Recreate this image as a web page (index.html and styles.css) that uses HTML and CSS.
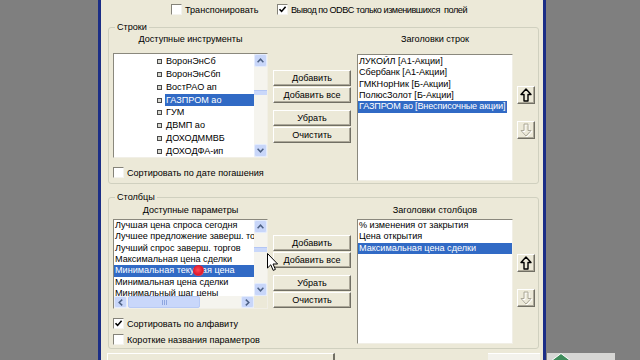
FILE: index.html
```html
<!DOCTYPE html>
<html lang="ru">
<head>
<meta charset="UTF-8">
<title>Настройка таблицы</title>
<link rel="stylesheet" href="styles.css">
</head>
<body>
<div class="dialog">
  <div class="top-row">
    <label class="check first"><span class="box"></span>Транспонировать</label>
    <label class="check odbc"><span class="box"><svg width="9" height="9" viewBox="0 0 9 9"><path d="M1.5 4.2 L3.6 6.4 L7.6 1.8" fill="none" stroke="#000" stroke-width="1.6"/></svg></span>Вывод по ODBC только изменившихся&nbsp; полей</label>
  </div>

  <!-- Строки -->
  <fieldset class="group group-rows">
    <legend>Строки</legend>
    <div class="cols">
      <div class="col col-src">
        <div class="head">Доступные инструменты</div>
        <div class="list tree">
          <div class="items">
            <div class="node"><i></i><span>ВоронЭнСб</span></div>
            <div class="node"><i></i><span>ВоронЭнСбп</span></div>
            <div class="node"><i></i><span>ВостРАО ап</span></div>
            <div class="node"><i></i><span class="sel">ГАЗПРОМ ао</span></div>
            <div class="node"><i></i><span>ГУМ</span></div>
            <div class="node"><i></i><span>ДВМП ао</span></div>
            <div class="node"><i></i><span>ДОХОДММВБ</span></div>
            <div class="node"><i></i><span>ДОХОДФА-ип</span></div>
          </div>
          <div class="vbar">
            <span class="sb-btn"><svg width="7" height="5" viewBox="0 0 7 5"><path d="M0.6 4.2 L3.5 1.2 L6.4 4.2" fill="none" stroke="#4d6185" stroke-width="1.5"/></svg></span>
            <span class="thumb thumb-a"></span>
            <span class="sb-btn end"><svg width="7" height="5" viewBox="0 0 7 5"><path d="M0.6 0.8 L3.5 3.8 L6.4 0.8" fill="none" stroke="#4d6185" stroke-width="1.5"/></svg></span>
          </div>
        </div>
        <label class="check under"><span class="box"></span>Сортировать по дате погашения</label>
      </div>
      <div class="col col-btn">
        <button class="btn">Добавить</button>
        <button class="btn">Добавить все</button>
        <button class="btn gap">Убрать</button>
        <button class="btn">Очистить</button>
      </div>
      <div class="col col-dst">
        <div class="head">Заголовки строк</div>
        <div class="list plain">
          <div class="row">ЛУКОЙЛ [А1-Акции]</div>
          <div class="row">Сбербанк [А1-Акции]</div>
          <div class="row">ГМКНорНик [Б-Акции]</div>
          <div class="row">ПолюсЗолот [Б-Акции]</div>
          <div class="row sel short">ГАЗПРОМ ао [Внесписочные акции]</div>
        </div>
      </div>
      <div class="col col-move">
        <button class="move"><svg width="12" height="14" viewBox="0 0 12 14"><path d="M6 1 L11 6.5 L8 6.5 L8 13 L4 13 L4 6.5 L1 6.5 Z" fill="#ece9d8" stroke="#000" stroke-width="1.4" stroke-linejoin="round"/></svg></button>
        <button class="move off"><svg width="13" height="15" viewBox="0 0 13 15"><path d="M7 14 L12 8.5 L9 8.5 L9 2 L5 2 L5 8.5 L2 8.5 Z" fill="none" stroke="#fff" stroke-width="1"/><path d="M6 13 L11 7.5 L8 7.5 L8 1 L4 1 L4 7.5 L1 7.5 Z" fill="none" stroke="#aca899" stroke-width="1"/></svg></button>
      </div>
    </div>
  </fieldset>

  <!-- Столбцы -->
  <fieldset class="group group-cols">
    <legend>Столбцы</legend>
    <div class="cols">
      <div class="col col-src">
        <div class="head">Доступные параметры</div>
        <div class="list scroll2">
          <div class="items">
            <div class="row">Лучшая цена спроса сегодня</div>
            <div class="row">Лучшее предложение заверш. торгов</div>
            <div class="row">Лучший спрос заверш. торгов</div>
            <div class="row">Максимальная цена сделки</div>
            <div class="row sel">Минимальная текущая цена</div>
            <div class="row">Минимальная цена сделки</div>
            <div class="row">Минимальный шаг цены</div>
          </div>
          <div class="vbar">
            <span class="sb-btn"><svg width="7" height="5" viewBox="0 0 7 5"><path d="M0.6 4.2 L3.5 1.2 L6.4 4.2" fill="none" stroke="#4d6185" stroke-width="1.5"/></svg></span>
            <span class="thumb thumb-b"></span>
            <span class="sb-btn end"><svg width="7" height="5" viewBox="0 0 7 5"><path d="M0.6 0.8 L3.5 3.8 L6.4 0.8" fill="none" stroke="#4d6185" stroke-width="1.5"/></svg></span>
          </div>
          <div class="hbar">
            <span class="sb-btn"><svg width="5" height="7" viewBox="0 0 5 7"><path d="M4.2 0.6 L1.2 3.5 L4.2 6.4" fill="none" stroke="#4d6185" stroke-width="1.5"/></svg></span>
            <span class="hthumb"><i></i><i></i><i></i></span>
            <span class="sb-btn end"><svg width="5" height="7" viewBox="0 0 5 7"><path d="M0.8 0.6 L3.8 3.5 L0.8 6.4" fill="none" stroke="#4d6185" stroke-width="1.5"/></svg></span>
          </div>
          <div class="corner"></div>
        </div>
        <label class="check under"><span class="box"><svg width="9" height="9" viewBox="0 0 9 9"><path d="M1.5 4.2 L3.6 6.4 L7.6 1.8" fill="none" stroke="#000" stroke-width="1.6"/></svg></span>Сортировать по алфавиту</label>
        <label class="check under2"><span class="box"></span>Короткие названия параметров</label>
      </div>
      <div class="col col-btn">
        <button class="btn">Добавить</button>
        <button class="btn">Добавить все</button>
        <button class="btn gap">Убрать</button>
        <button class="btn">Очистить</button>
      </div>
      <div class="col col-dst">
        <div class="head">Заголовки столбцов</div>
        <div class="list plain">
          <div class="row">% изменения от закрытия</div>
          <div class="row">Цена открытия</div>
          <div class="row sel">Максимальная цена сделки</div>
        </div>
      </div>
      <div class="col col-move">
        <button class="move"><svg width="12" height="14" viewBox="0 0 12 14"><path d="M6 1 L11 6.5 L8 6.5 L8 13 L4 13 L4 6.5 L1 6.5 Z" fill="#ece9d8" stroke="#000" stroke-width="1.4" stroke-linejoin="round"/></svg></button>
        <button class="move off"><svg width="13" height="15" viewBox="0 0 13 15"><path d="M7 14 L12 8.5 L9 8.5 L9 2 L5 2 L5 8.5 L2 8.5 Z" fill="none" stroke="#fff" stroke-width="1"/><path d="M6 13 L11 7.5 L8 7.5 L8 1 L4 1 L4 7.5 L1 7.5 Z" fill="none" stroke="#aca899" stroke-width="1"/></svg></button>
      </div>
    </div>
  </fieldset>

  <div class="bottom-row">
    <div class="bottom-panel"></div>
    <div class="bottom-btn"></div>
  </div>
</div>

<!-- курсор и отметка клика поверх окна -->
<div class="click-dot"></div>
<svg class="cursor" width="12" height="19" viewBox="0 0 12 19"><path d="M0.5 0.5 L0.5 15 L3.8 11.8 L6.2 17.4 L8.4 16.4 L6 11 L10.6 11 Z" fill="#fff" stroke="#000" stroke-width="1" stroke-linejoin="round"/></svg>
<div class="logo"><svg width="24" height="7" viewBox="0 0 24 7"><path d="M2 8 L12 0.5 L22 8 Z" fill="#3f8d5c" stroke="#fff" stroke-width="1"/></svg></div>
</body>
</html>
```

FILE: styles.css
```css
* {
    margin: 0;
    padding: 0;
    box-sizing: border-box;
}

body {
    position: relative;
    width: 640px;
    height: 360px;
    overflow: hidden;
    background: #7f7f7f;
    font-family: "Liberation Sans", Arial, sans-serif;
    font-size: 9.1px;
    color: #000;
}

/* Окно */
.dialog {
    margin-left: 98px;
    width: 448px;
    height: 360px;
    background: #ece9d8;
    border-left: 3px solid #1b2d86;
    border-right: 3px solid #1b2d86;
}

.top-row {
    display: flex;
    align-items: center;
    height: 19px;
    margin-bottom: 2px;
    padding-left: 70px;
}

.check {
    display: flex;
    align-items: center;
    gap: 3px;
    height: 11px;
    line-height: 12px;
    white-space: nowrap;
}

.top-row .first {
    width: 106px;
}

.top-row .odbc {
    letter-spacing: -0.45px;
}

.box {
    flex: none;
    display: flex;
    align-items: center;
    justify-content: center;
    width: 11px;
    height: 11px;
    background: #fff;
    border: 1px solid;
    border-color: #858379 #f4f3ee #f4f3ee #858379;
}

/* Группы */
.group {
    min-width: 0;
    margin: 0 4px 0 7px;
    padding: 0 3px 2px 4px;
    border: 1px solid #d0d0bf;
    border-radius: 3px;
}

.group legend {
    margin-left: 2px;
    padding: 0 2px;
    line-height: 12px;
}

.group-cols {
    margin-top: 7px;
    padding-bottom: 3px;
}

.cols {
    display: flex;
    align-items: flex-start;
}

.col {
    display: flex;
    flex-direction: column;
}

.col-src {
    width: 155px;
}

.col-btn {
    width: 78px;
    margin-left: 5px;
}

.col-dst {
    width: 156px;
    margin-left: 6px;
}

.col-move {
    width: 18px;
    margin-left: 4px;
}

.head {
    height: 12px;
    line-height: 12px;
    text-align: center;
    white-space: nowrap;
}

.group-rows .col-src .list { margin-top: 8px; height: 105px; }
.group-rows .col-dst .list { margin-top: 9px; height: 127px; padding-top: 1px; }
.group-rows .col-btn { padding-top: 37px; }
.group-rows .col-move { padding-top: 53px; }

.group-cols .head { margin-top: 1px; }
.group-cols .col-src .list { margin-top: 3px; height: 90px; }
.group-cols .col-dst .list { margin-top: 3px; height: 125px; }
.group-cols .col-btn { padding-top: 32px; }
.group-cols .col-move { padding-top: 51px; }

.under { margin-top: 9px; }
.under2 { margin-top: 5px; }

/* Списки */
.list {
    overflow: hidden;
    background: #fff;
    border: 1px solid;
    border-color: #8a887d #f1efe6 #f1efe6 #8a887d;
}

.row {
    height: 11.35px;
    line-height: 11.35px;
    padding-left: 1px;
    white-space: nowrap;
    overflow: hidden;
}

.sel {
    background: #316ac5;
    color: #fff;
}

.row.short {
    margin-right: 5px;
    letter-spacing: -0.17px;
}

.tree {
    display: grid;
    grid-template-columns: 1fr 13px;
}

.tree .items {
    padding-top: 1px;
    overflow: hidden;
}

.node {
    display: flex;
    align-items: center;
    height: 12.86px;
    padding-left: 43px;
    white-space: nowrap;
}

.node i {
    flex: none;
    width: 5px;
    height: 5px;
    margin-right: 3px;
    border: 1px solid #4a4a4a;
    background: #d8d8d0;
}

.node span {
    flex: 1;
    height: 12.86px;
    line-height: 12.86px;
    padding-left: 1px;
}

.scroll2 {
    display: grid;
    grid-template-columns: 140px 13px;
    grid-template-rows: 76px 12px;
}

.scroll2 .items {
    overflow: hidden;
}

/* Полосы прокрутки */
.vbar {
    display: flex;
    flex-direction: column;
    background: #f5f4ee;
}

.hbar {
    display: flex;
    background: #f5f4ee;
}

.corner {
    background: #ece9d8;
}

.sb-btn {
    flex: none;
    display: flex;
    align-items: center;
    justify-content: center;
    width: 13px;
    height: 13px;
    background: #c8d6f9;
    border: 1px solid #e4ecfd;
    border-radius: 2px;
}

.hbar .sb-btn {
    height: 12px;
}

.sb-btn.end {
    margin-top: auto;
}

.hbar .sb-btn.end {
    margin-top: 0;
    margin-left: auto;
}

.thumb {
    height: 5px;
    background: #cad8fa;
    border-top: 1px solid #b3c6f4;
}

.thumb-a { margin-top: 23px; }
.thumb-b { margin-top: 14px; }

.hthumb {
    display: flex;
    align-items: center;
    justify-content: center;
    gap: 1px;
    width: 72px;
    margin-left: 1px;
    background: #c9d7fa;
    border: 1px solid #b8caf5;
    border-radius: 2px;
}

.hthumb i {
    width: 1px;
    height: 5px;
    background: #8ea6e0;
}

/* Кнопки */
.btn {
    display: block;
    width: 78px;
    height: 16px;
    background: #ece9d8;
    border: 1px solid;
    border-color: #fff #716f64 #716f64 #fff;
    box-shadow: inset -1px -1px 0 #aca899;
    font: inherit;
    line-height: 13px;
    color: #000;
    text-align: center;
}

.btn + .btn { margin-top: 1px; }
.btn.gap { margin-top: 7px; }

.move {
    display: flex;
    align-items: center;
    justify-content: center;
    width: 18px;
    height: 18px;
    background: #ece9d8;
    border: 1px solid;
    border-color: #fff #716f64 #716f64 #fff;
    box-shadow: inset -1px -1px 0 #aca899;
}

.move + .move { margin-top: 17px; }

/* Низ окна */
.bottom-row {
    display: flex;
    margin-top: 4px;
}

.bottom-panel {
    width: 228px;
    height: 12px;
    margin-left: 6px;
    border-top: 1px solid #fff;
    border-left: 1px solid #fff;
    border-right: 2px solid #716f64;
}

.bottom-btn {
    width: 52px;
    height: 12px;
    margin-left: 153px;
    background: #f3f2ec;
    border-top: 1px solid #fff;
}

/* Поверх */
.click-dot {
    position: absolute;
    left: 193px;
    top: 265px;
    width: 11px;
    height: 11px;
    border-radius: 50%;
    background: radial-gradient(circle at 45% 45%, #ff4a5a 0, #e01a2c 55%, #f07a86 100%);
}

.cursor {
    position: absolute;
    left: 267px;
    top: 253px;
}

.logo {
    position: absolute;
    left: 547px;
    top: 353px;
    width: 68px;
    height: 7px;
    background: #d6d6d4;
    padding-left: 2px;
}

.logo svg {
    display: block;
}
```
